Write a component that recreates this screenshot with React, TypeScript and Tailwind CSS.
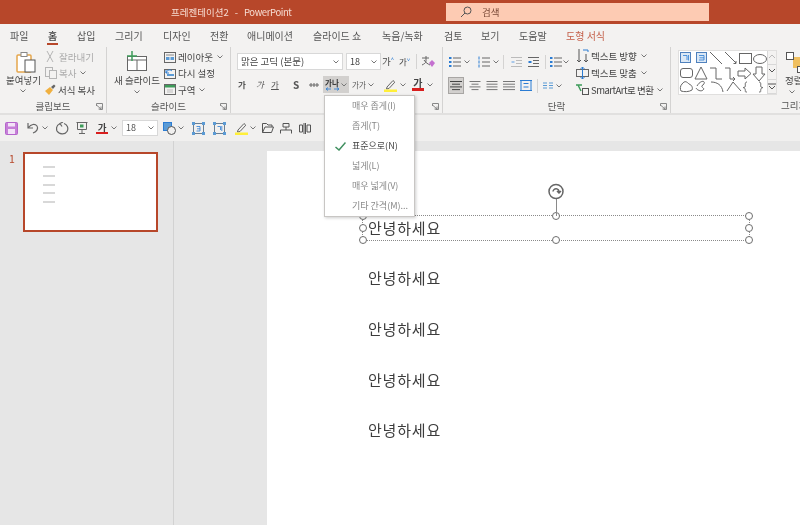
import type { ReactNode } from "react";

const FONT = "[font-family:'Noto_Sans_CJK_KR','Liberation_Sans',sans-serif]";

function Chev({ className = "" }: { className?: string }) {
  return (
    <svg className={`shrink-0 ${className}`} width="6" height="4" viewBox="0 0 6 4" fill="none" stroke="#777" strokeWidth="1">
      <path d="M0.5 0.5 3 3 5.5 0.5" />
    </svg>
  );
}

function Launcher() {
  return (
    <svg className="absolute right-[3px] bottom-[3px]" width="7" height="7" viewBox="0 0 7 7" fill="none" stroke="#888" strokeWidth="1">
      <path d="M0.5 3V0.5H6.5V6.5H3.5M1 2.5 5 6M5 3.5V6H2.5" />
    </svg>
  );
}

function Group({ width, label, children }: { width: number; label: string; children: ReactNode }) {
  return (
    <div className="relative shrink-0 h-full border-r border-[#d4d3d2] flex flex-col" style={{ width }}>
      <div className="flex-1 min-h-0 flex">{children}</div>
      <div className="h-[15px] pt-[1px] text-center text-[9.5px] leading-[14px] text-[#555]">{label}</div>
      <Launcher />
    </div>
  );
}

function Small({ icon, text, chev, muted, tight }: { icon: ReactNode; text: string; chev?: boolean; muted?: boolean; tight?: boolean }) {
  return (
    <div className={`h-[17px] flex items-center gap-[2px] text-[9.5px] whitespace-nowrap ${muted ? "text-[#aaa]" : "text-[#444]"}`}>
      {icon}
      <span className={tight ? "tracking-[-0.5px]" : ""}>{text}</span>
      {chev && <Chev className="ml-[2px]" />}
    </div>
  );
}

function Lines({ color = "#555", widths = [12, 12, 12, 12] }: { color?: string; widths?: number[] }) {
  return (
    <svg width="12" height="11" viewBox="0 0 12 11" stroke={color} strokeWidth="1" className="shrink-0">
      {widths.map((w, i) => (
        <path key={i} d={`M${(12 - w) / 2} ${1.5 + i * 2.7}H${(12 + w) / 2}`} />
      ))}
    </svg>
  );
}

function Bullets({ numbered }: { numbered?: boolean }) {
  return (
    <svg width="12" height="12" viewBox="0 0 12 12" className="shrink-0">
      <path d="M4 2H12M4 6H12M4 10H12" stroke="#666" />
      <path d={numbered ? "M1 .5V3.5M1 4.5V7.5M1 8.5V11.5" : "M0 2H2.5M0 6H2.5M0 10H2.5"} stroke="#2b7cd3" strokeWidth={numbered ? 1 : 2} />
    </svg>
  );
}

function Indent({ more }: { more?: boolean }) {
  return (
    <svg width="11" height="10" viewBox="0 0 11 10" className="shrink-0">
      <path d="M0 .5H11M5 3.5H11M5 6.5H11M0 9.5H11" stroke={more ? "#666" : "#bbb"} />
      <path d="M0.5 5H3.5" stroke={more ? "#2b7cd3" : "#a8c8ea"} strokeWidth="2" />
    </svg>
  );
}

function BoxIcon({ letter }: { letter?: boolean }) {
  return (
    <svg width="13" height="13" viewBox="0 0 13 13" className="shrink-0" fill="none">
      <rect x="1.5" y="1.5" width="10" height="10" stroke="#6b7f92" />
      <path d="M0 0h3v3H0zM10 0h3v3h-3zM0 10h3v3H0zM10 10h3v3h-3z" fill="#5b9bd5" />
      <path d={letter ? "M4.5 4.5H7.5V8M8.8 4V9" : "M4.5 4.5H8V9H4.5M5 6.8H8"} stroke="#2b7cd3" strokeWidth="0.8" />
    </svg>
  );
}

function Pen() {
  return (
    <svg width="13" height="14" viewBox="0 0 13 14" className="shrink-0" fill="none">
      <path d="M3 9 9 2.5 10.8 4.2 5 10.5 2.5 11Z" stroke="#666" />
      <rect x="0" y="11.5" width="13" height="2.5" fill="#ffef3a" />
    </svg>
  );
}

function RedGa({ size = "text-[10px]" }: { size?: string }) {
  return (
    <div className={`flex flex-col items-center leading-[10px] ${size} text-[#444] font-bold shrink-0`}>
      <span>가</span>
      <div className="w-[12px] h-[2.5px] bg-[#d81e1e]" />
    </div>
  );
}

function Shapes() {
  return (
    <svg width="88" height="44" viewBox="0 0 88 44" fill="none" stroke="#666" strokeWidth="1" className="shrink-0 -mt-[3px]">
      <g stroke="#4f81bd">
        <rect x="1.5" y="3.5" width="10" height="10" fill="#dbe8f5" />
        <rect x="17.5" y="3.5" width="10" height="10" fill="#dbe8f5" />
        <path d="M4 6.5H8V11M9.5 6V11.5M20 6.5H25V11H20M20.5 8.8H25" strokeWidth="0.8" stroke="#2b7cd3" />
      </g>
      <path d="M31 3 43 15M46 3 57 14" />
      <path d="M57 12v2.5h-2.5" />
      <rect x="60.5" y="4.5" width="12" height="10" />
      <ellipse cx="81" cy="10" rx="6.5" ry="4.5" />
      <rect x="1.5" y="19.5" width="12" height="9" rx="2.5" />
      <path d="M16 30 22 18 28 30Z" />
      <path d="M31 19H37V30H43M46 19H51V30H56M54 28l2 2-2 2" />
      <path d="M59 22H66V19L72 24.5 66 30V27H59Z" />
      <path d="M77 18H83V25H86L80 32 74 25H77Z" />
      <path d="M3 35C6 31 8 33 10 35 13 36 14 39 13 41 10 43 5 43 2 42 1 40 1 37 3 35Z" />
      <path d="M18 37C22 30 28 32 24 36 20 38 27 39 24 41 22 43 18 41 17 39" />
      <path d="M32 33C38 33 43 36 44 43M48 42 54 33 62 42" />
      <path d="M68 33C65 33 67 37 66 38 65 38.500 64 38.500 64 38.500 65 39 66 39 66 40 67 42 65 43 68 43" />
      <path d="M80 33C83 33 81 37 82 38 83 38.500 84 38.500 84 38.500 83 39 82 39 82 40 81 42 83 43 80 43" />
    </svg>
  );
}

const shapeScroll = [
  <path key="u" d="M1 4 4 1 7 4" stroke="#bbb" fill="none" />,
  <path key="d" d="M1 1 4 4 7 1" stroke="#555" fill="none" />,
  <path key="m" d="M0 1H8M1 3 4 6 7 3" stroke="#555" fill="none" />,
];

const menuItems = ["매우 좁게(I)", "좁게(T)", "표준으로(N)", "넓게(L)", "매우 넓게(V)", "기타 간격(M)..."];
const slideRows = [0, 1, 2, 3, 4];
const handles = [
  "left-[-4px] top-[-4px]",
  "left-[189px] top-[-4px]",
  "right-[-4px] top-[-4px]",
  "left-[-4px] top-[8px]",
  "right-[-4px] top-[8px]",
  "left-[-4px] bottom-[-4px]",
  "left-[189px] bottom-[-4px]",
  "right-[-4px] bottom-[-4px]",
];

export default function App() {
  return (
    <div className={`relative w-[800px] h-[525px] overflow-hidden bg-[#e6e6e6] flex flex-col blur-[0.3px] ${FONT}`}>
      {/* title bar */}
      <div className="h-[24px] shrink-0 bg-[#b7472a] flex items-center text-[9.5px] text-[#f6dcd2]">
        <div className="w-[446px] pl-[171px] shrink-0 whitespace-nowrap">
          <span>프레젠테이션2</span>
          <span className="ml-[6px]">-</span>
          <span className="ml-[6px] tracking-[-0.4px]">PowerPoint</span>
        </div>
        <div className="w-[263px] h-[18px] bg-[#fdcbb3] flex items-center pl-[14px] gap-[10px] text-[#7a4a38]">
          <svg width="12" height="12" viewBox="0 0 12 12" fill="none" stroke="#555">
            <circle cx="7.500" cy="4.500" r="3.500" />
            <path d="M5 7 1 11" />
          </svg>
          <span>검색</span>
        </div>
      </div>

      {/* tabs */}
      <div className="h-[23px] shrink-0 bg-[#f3f2f1] flex items-center text-[10px] text-[#555] whitespace-nowrap">
        <span className="ml-[10px] w-[38px]">파일</span>
        <span className="relative w-[29px] font-medium text-[#444]">
          홈
          <span className="absolute left-[-1px] top-[15px] w-[11px] h-[2px] bg-[#b7472a]" />
        </span>
        <span className="w-[38px]">삽입</span>
        <span className="w-[48px]">그리기</span>
        <span className="w-[47px]">디자인</span>
        <span className="w-[37px]">전환</span>
        <span className="w-[66px]">애니메이션</span>
        <span className="w-[69px]">슬라이드 쇼</span>
        <span className="w-[62px]">녹음/녹화</span>
        <span className="w-[37px]">검토</span>
        <span className="w-[38px]">보기</span>
        <span className="w-[47px]">도움말</span>
        <span className="text-[#c4604a]">도형 서식</span>
      </div>

      {/* ribbon */}
      <div className="h-[68px] shrink-0 bg-[#f3f2f1] border-b-2 border-[#e1e0df] flex text-[#444]">
        <Group width={107} label="클립보드">
          <div className="w-[45px] shrink-0 flex flex-col items-center pt-[4px]">
            <svg width="24" height="22" viewBox="0 0 24 22" fill="none" className="ml-[6px]">
              <rect x="3" y="4" width="14" height="17" rx="1" fill="#fff" stroke="#e5a64c" strokeWidth="1.500" />
              <rect x="7" y="1.500" width="6" height="4" fill="#fff" stroke="#888" />
              <rect x="11" y="9" width="10" height="12" fill="#fff" stroke="#555" />
            </svg>
            <span className="text-[9.5px] leading-[12px] mt-[1px] ml-[2px] whitespace-nowrap">붙여넣기</span>
            <Chev className="mt-[3px]" />
          </div>
          <div className="flex flex-col pt-[2px]">
            <Small
              muted
              text="잘라내기"
              icon={
                <svg width="10" height="12" viewBox="0 0 10 12" fill="none" stroke="#b5b5b5" className="mr-[2px]">
                  <path d="M2 0 8 11M8 0 2 11" />
                </svg>
              }
            />
            <Small
              muted
              chev
              text="복사"
              icon={
                <svg width="12" height="12" viewBox="0 0 12 12" fill="none" stroke="#b5b5b5">
                  <rect x="0.500" y="0.500" width="7" height="9" />
                  <rect x="4.500" y="3.500" width="7" height="8" fill="#f3f2f1" />
                </svg>
              }
            />
            <Small
              text="서식 복사"
              icon={
                <svg width="12" height="12" viewBox="0 0 12 12" className="-ml-[1px]">
                  <path d="M1 7 6 3 9 6 5 11Z" fill="#f0b040" />
                  <path d="M7 3 10 0.500 11.500 2 9 5" fill="#666" />
                </svg>
              }
            />
          </div>
        </Group>

        <Group width={124} label="슬라이드">
          <div className="w-[57px] shrink-0 flex flex-col items-center pt-[4px] pl-[3px]">
            <svg width="22" height="21" viewBox="0 0 22 21" fill="none">
              <rect x="1.500" y="5.500" width="19" height="14" fill="#fff" stroke="#666" />
              <path d="M1.500 9H20.500M11 9V19.500" stroke="#666" />
              <path d="M6 0V10M1 5H11" stroke="#3e9c5a" strokeWidth="1.500" />
            </svg>
            <span className="text-[9.5px] leading-[12px] mt-[2px] whitespace-nowrap">새 슬라이드</span>
            <Chev className="mt-[4px]" />
          </div>
          <div className="flex flex-col pt-[2px]">
            <Small
              chev
              text="레이아웃"
              icon={
                <svg width="12" height="11" viewBox="0 0 12 11" fill="none">
                  <rect x="0.500" y="0.500" width="11" height="10" stroke="#666" />
                  <path d="M2 3H10" stroke="#888" />
                  <path d="M2 5h3.500v3H2zM6.500 5H10v3H6.500z" fill="#5b9bd5" />
                </svg>
              }
            />
            <Small
              text="다시 설정"
              icon={
                <svg width="12" height="11" viewBox="0 0 12 11" fill="none">
                  <rect x="0.500" y="1.500" width="11" height="9" stroke="#666" />
                  <path d="M2 5C3 2 6 1 8 3M2 2V5H5" stroke="#2b7cd3" />
                  <path d="M3 7H10" stroke="#5b9bd5" strokeWidth="2" />
                </svg>
              }
            />
            <Small
              chev
              text="구역"
              icon={
                <svg width="12" height="11" viewBox="0 0 12 11" fill="none">
                  <rect x="0.500" y="0.500" width="11" height="10" stroke="#666" />
                  <rect x="1" y="1" width="10" height="2.500" fill="#3e9c5a" />
                  <path d="M3 6H9M3 8H9" stroke="#bbb" />
                </svg>
              }
            />
          </div>
        </Group>

        <Group width={212} label="">
          <div className="flex flex-col pl-[6px] pt-[6px]">
            <div className="h-[17px] flex items-center">
              <div className="w-[106px] h-[17px] bg-white border border-[#d8d8d8] flex items-center justify-between px-[3px] text-[9.500px]">
                <span>맑은 고딕 (본문)</span>
                <Chev />
              </div>
              <div className="ml-[3px] w-[35px] h-[17px] bg-white border border-[#d8d8d8] flex items-center justify-between px-[3px] text-[9px]">
                <span>18</span>
                <Chev />
              </div>
              <span className="ml-[1px] w-[17px] text-[9.500px]">
                가<sup className="text-[6px] text-[#2b7cd3]">^</sup>
              </span>
              <span className="ml-[0px] w-[17px] text-[8.500px]">
                가<sup className="text-[6px] text-[#2b7cd3]">˅</sup>
              </span>
              <div className="w-px h-[15px] bg-[#d4d3d2] mr-[4px]" />
              <svg width="14" height="14" viewBox="0 0 14 14">
                <path d="M1 3H8M5 1V6C5 8 3 9 1 10M3 5C5 8 7 9 9 10" stroke="#666" fill="none" />
                <path d="M8 8 11 5 14 8 11 12Z" fill="#c470d0" />
              </svg>
            </div>
            <div className="h-[23px] mt-[3px] flex items-center text-[8.500px] text-[#555]">
              <span className="ml-[1px] w-[18px] font-bold">가</span>
              <span className="w-[15px] italic">가</span>
              <span className="w-[22px] underline">가</span>
              <span className="w-[16px] font-bold text-[10px]">S</span>
              <svg width="10" height="6" viewBox="0 0 10 6" className="mr-[3px]">
                <path d="M0 3H10M2 1V5M5 1V5M8 1V5" stroke="#666" />
              </svg>
              <div className="ml-[1px] w-[26px] h-[17px] bg-[#d2d0ce] flex items-center justify-center gap-[2px]">
                <div className="flex flex-col items-center leading-[8px] text-[7.500px] font-bold text-[#333]">
                  <span>가나</span>
                  <svg width="13" height="4" viewBox="0 0 13 4" fill="none" stroke="#2b7cd3" strokeWidth="0.800">
                    <path d="M0 2H5M2 .5 0 2 2 3.500M8 2H13M11 .5 13 2 11 3.500" />
                  </svg>
                </div>
                <Chev />
              </div>
              <span className="ml-[3px] text-[7.500px]">가가</span>
              <Chev className="ml-[2px]" />
              <div className="ml-[10px] flex items-center gap-[3px]">
                <Pen />
                <Chev />
              </div>
              <div className="ml-[6px] flex items-center gap-[3px]">
                <RedGa />
                <Chev />
              </div>
            </div>
          </div>
        </Group>

        <Group width={228} label="단락">
          <div className="w-[133px] shrink-0 flex flex-col pt-[8px] pl-[6px]">
            <div className="h-[14px] flex items-center">
              <Bullets />
              <Chev className="ml-[3px]" />
              <div className="w-[8px]" />
              <Bullets numbered />
              <Chev className="ml-[3px]" />
              <div className="w-px h-[14px] ml-[4px] mr-[7px] bg-[#d4d3d2]" />
              <Indent />
              <div className="w-[6px]" />
              <Indent more />
              <div className="w-px h-[14px] ml-[6px] mr-[4px] bg-[#d4d3d2]" />
              <Bullets />
              <Chev className="ml-[1px]" />
            </div>
            <div className="h-[17px] mt-[8px] flex items-center">
              <div className="w-[16px] h-[17px] -ml-[1px] bg-[#d2d0ce] border border-[#a8a6a4] flex items-center justify-center">
                <Lines color="#444" widths={[12, 8, 12, 8]} />
              </div>
              <div className="w-[5px]" />
              <Lines color="#777" widths={[11, 7, 11, 7]} />
              <div className="w-[5px]" />
              <Lines color="#777" widths={[11, 11, 11, 11]} />
              <div className="w-[5px]" />
              <Lines color="#777" />
              <div className="w-[5px]" />
              <svg width="12" height="11" viewBox="0 0 12 11" stroke="#2b7cd3" fill="none">
                <path d="M0 .5H12M0 10.500H12M1 0V11M11 0V11M3.500 3.500H8.500M3.500 7H8.500" />
              </svg>
              <div className="w-px h-[14px] mx-[5px] bg-[#d4d3d2]" />
              <svg width="10" height="7" viewBox="0 0 10 7" stroke="#5b9bd5">
                <path d="M0 1H4M6 1H10M0 3.500H4M6 3.500H10M0 6H4M6 6H10" />
              </svg>
              <Chev className="ml-[3px]" />
            </div>
          </div>
          <div className="flex flex-col pt-[1px]">
            <Small
              chev
              text="텍스트 방향"
              icon={
                <svg width="13" height="14" viewBox="0 0 13 14" fill="none" stroke="#555">
                  <path d="M3 0V13M1 11 3 13 5 11M10 5V13M8 11 10 13 12 11" />
                  <path d="M7 1H12V3" stroke="#2b7cd3" />
                </svg>
              }
            />
            <Small
              chev
              text="텍스트 맞춤"
              icon={
                <svg width="13" height="12" viewBox="0 0 13 12" fill="none">
                  <rect x="0.500" y="2.500" width="12" height="7" stroke="#666" />
                  <path d="M6.500 0V12M4.500 2 6.500 0 8.500 2M4.500 10 6.500 12 8.500 10" stroke="#2b7cd3" />
                </svg>
              }
            />
            <Small
              chev
              tight
              text="SmartArt로 변환"
              icon={
                <svg width="13" height="11" viewBox="0 0 13 11" fill="none">
                  <path d="M0 1H6M2 1 5 7" stroke="#3e9c5a" strokeWidth="1.500" />
                  <rect x="6.500" y="4.500" width="6" height="6" stroke="#555" />
                </svg>
              }
            />
          </div>
        </Group>

        <div className="w-[107px] shrink-0 h-full flex flex-col">
          <div className="flex-1 min-h-0 pl-[7px] pt-[3px]">
            <div className="w-[99px] h-[45px] bg-white border border-[#e0dfde] flex">
              <div className="flex-1 flex items-center justify-center">
                <Shapes />
              </div>
              <div className="w-[10px] flex flex-col border-l border-[#d8d8d8]">
                {shapeScroll.map((icon, i) => (
                  <div key={i} className="flex-1 flex items-center justify-center border-b border-[#d8d8d8] bg-[#f3f2f1]">
                    <svg width="8" height="7" viewBox="0 0 8 7">
                      {icon}
                    </svg>
                  </div>
                ))}
              </div>
            </div>
          </div>
        </div>

        <div className="flex flex-col items-start pt-[4px] shrink-0 ml-[7px]">
          <svg width="20" height="22" viewBox="0 0 20 22" fill="none">
            <rect x="8" y="6" width="14" height="11" fill="#f0c060" />
            <rect x="1.500" y="1.500" width="7" height="7" fill="#fff" stroke="#555" />
            <rect x="12.500" y="15.500" width="7" height="6" fill="#fff" stroke="#555" />
          </svg>
          <span className="text-[9.500px] leading-[12px] mt-[1px] whitespace-nowrap">정렬</span>
          <Chev className="mt-[4px] ml-[4px]" />
          <span className="text-[9.500px] leading-[12px] mt-[5px] -ml-[4px] whitespace-nowrap text-[#555]">그리기</span>
        </div>
      </div>

      {/* quick access */}
      <div className="h-[26px] shrink-0 bg-[#f1f0ef] flex items-center pl-[5px] text-[#555]">
        <svg width="13" height="13" viewBox="0 0 13 13" className="shrink-0">
          <rect x="0.500" y="0.500" width="12" height="12" rx="1" fill="#c67fd8" stroke="#b565cc" />
          <rect x="3" y="1" width="7" height="3.500" fill="#f3e3f7" />
          <rect x="3" y="7" width="7" height="5" fill="#f3e3f7" />
        </svg>
        <svg width="12" height="12" viewBox="0 0 12 12" fill="none" stroke="#666" strokeWidth="1.200" className="ml-[9px]">
          <path d="M1 1V6H6M1.500 5.500C4 2 8 1.500 10 4 11.500 6.500 10 9.500 6 11" />
        </svg>
        <Chev className="ml-[3px]" />
        <svg width="13" height="13" viewBox="0 0 13 13" fill="none" stroke="#666" strokeWidth="1.200" className="ml-[8px]">
          <path d="M4 1.500C1 3 0 6 1 9 3 12.500 9 13 11 9.500 13 6 11 2.500 8 1.500M7 0 4 1.500 6 4.500" />
        </svg>
        <svg width="12" height="12" viewBox="0 0 12 12" fill="none" stroke="#666" className="ml-[7px]">
          <path d="M.5 .5H11.500M1.500 .5V7.500H10.500V.5M6 7.500V11M3 11.500H9" />
          <rect x="4" y="2.500" width="3.500" height="3" fill="#3e9c5a" stroke="none" />
        </svg>
        <div className="ml-[8px]">
          <RedGa size="text-[9.500px]" />
        </div>
        <Chev className="ml-[3px]" />
        <div className="ml-[5px] w-[36px] h-[16px] bg-white border border-[#d8d8d8] flex items-center justify-between px-[3px] text-[9px]">
          <span>18</span>
          <Chev />
        </div>
        <svg width="13" height="13" viewBox="0 0 13 13" fill="none" className="ml-[5px]">
          <rect x="0.500" y="0.500" width="8" height="8" fill="#5b9bd5" stroke="#2b7cd3" />
          <circle cx="8.500" cy="8.500" r="4" fill="#f1f0ef" stroke="#555" />
        </svg>
        <Chev className="ml-[2px]" />
        <div className="ml-[8px]">
          <BoxIcon />
        </div>
        <div className="ml-[8px]">
          <BoxIcon letter />
        </div>
        <div className="ml-[9px]">
          <Pen />
        </div>
        <Chev className="ml-[2px]" />
        <svg width="12" height="10" viewBox="0 0 12 10" fill="none" stroke="#555" className="ml-[6px]">
          <path d="M.5 9.500V.5H4.500L6 2H10V4M.5 9.500H9.500L11.500 4H3L.5 9.500" />
        </svg>
        <svg width="12" height="11" viewBox="0 0 12 11" fill="none" stroke="#555" className="ml-[6px]">
          <path d="M3 .5H9V4H3zM.5 10.500V7H11.500V10.500M6 4V7" />
        </svg>
        <svg width="12" height="11" viewBox="0 0 12 11" fill="none" stroke="#555" className="ml-[7px]">
          <path d="M.5 2H3.500V9H.5zM8 2H11.500V9H8zM5 0V11M6.500 0V11" />
        </svg>
      </div>

      {/* workspace */}
      <div className="flex-1 min-h-0 flex">
        <div className="w-[174px] shrink-0 border-r border-[#d2d2d2] flex items-start pt-[11px] pl-[9px]">
          <span className="w-[14px] text-[10.500px] leading-[14px] text-[#b7472a]">1</span>
          <div className="w-[135px] h-[80px] bg-white border-2 border-[#b7472a] pt-[12px] pl-[18px] flex flex-col gap-[6.800px]">
            {slideRows.map((r) => (
              <div key={r} className="w-[12px] h-[2px] bg-[#d8d8d8]" />
            ))}
          </div>
        </div>
        <div className="flex-1 pl-[93px] pt-[10px]">
          <div className="relative h-[400px] bg-white pl-[101px] pt-[51.500px] text-[15px] tracking-[0.800px] text-[#3c3c3c]">
            {slideRows.map((r) => (
              <div key={r} className="h-[50.700px] leading-[50px]">
                안녕하세요
              </div>
            ))}
            <div className="absolute left-[95px] top-[64px] w-[388px] h-[26px] border border-dotted border-[#8a8a8a]">
              {handles.map((h) => (
                <div key={h} className={`absolute w-[8px] h-[8px] rounded-full bg-white border-[1.500px] border-[#6e6e6e] ${h}`} />
              ))}
              <div className="absolute left-[193px] top-[-17px] w-px h-[17px] bg-[#8a8a8a]" />
              <svg width="17" height="17" viewBox="0 0 17 17" fill="none" stroke="#666" strokeWidth="1.500" className="absolute left-[185px] top-[-33px]">
                <circle cx="8" cy="8.500" r="7" />
                <path d="M5 8.500A3 3 0 1 1 11 9M9 8 11 10 13 8" />
              </svg>
            </div>
          </div>
        </div>
      </div>

      {/* character spacing menu */}
      <div className="absolute left-[324px] top-[95px] w-[91px] h-[122px] bg-white border border-[#c8c6c4] shadow-[1px_1px_3px_rgba(0,0,0,0.2)] flex flex-col text-[9px] text-[#888]">
        {menuItems.map((item, i) => (
          <div key={item} className={`relative h-[20px] flex items-center pl-[27px] whitespace-nowrap ${i === 2 ? "text-[#444]" : ""}`}>
            {i === 2 && (
              <svg width="11" height="9" viewBox="0 0 11 9" fill="none" stroke="#3f8f5f" strokeWidth="1.500" className="absolute left-[10px] top-[6px]">
                <path d="M.5 5 4 8 10.500 .5" />
              </svg>
            )}
            {item}
          </div>
        ))}
      </div>
    </div>
  );
}
